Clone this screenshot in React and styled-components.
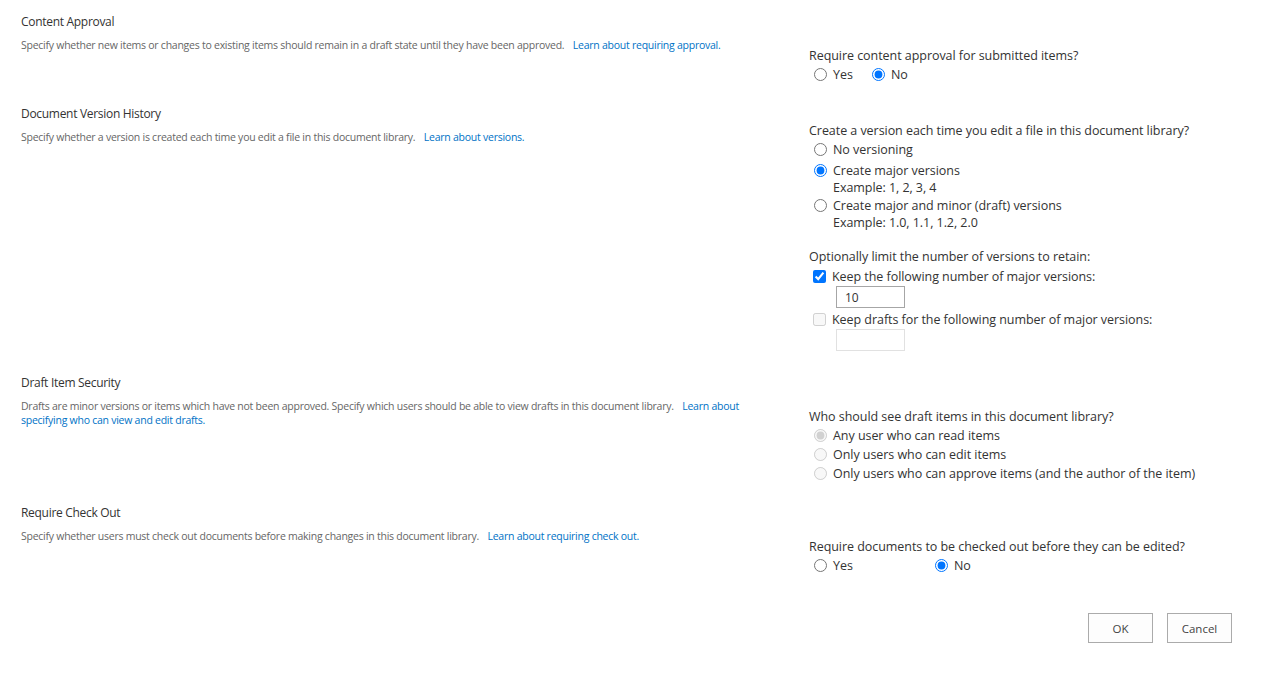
import React from 'react'
import styled, { createGlobalStyle } from 'styled-components'

const GlobalStyle = createGlobalStyle`
  body {
    margin: 0;
    background: #fff;
    font-family: 'Open Sans', 'Noto Sans', 'Liberation Sans', sans-serif;
    color: #333;
  }
`

const Page = styled.div`
  padding: 12px 56px 30px 21px;
`

const Section = styled.div`
  display: grid;
  grid-template-columns: 788px 1fr;
  padding-bottom: ${p => p.gap || 20}px;
`

const Info = styled.div`
  padding-right: 40px;
`

const Title = styled.div`
  font-size: 12px;
  letter-spacing: -0.3px;
  line-height: 20px;
  color: #333;
`

const Description = styled.div`
  margin-top: 6px;
  font-size: 10.5px;
  letter-spacing: -0.25px;
  line-height: 14px;
  color: #666;
`

const Link = styled.a`
  color: #0072c6;
  text-decoration: none;
  margin-left: 6px;
`

const Controls = styled.div`
  padding-top: ${p => p.offset}px;
  font-size: 12.5px;
  letter-spacing: -0.05px;
  color: #333;
`

const Question = styled.div`
  line-height: 19px;
`

const Inline = styled.div`
  display: flex;
`

const Option = styled.label`
  display: flex;
  align-items: center;
  height: 19px;
  width: ${p => (p.width ? `${p.width}px` : 'auto')};
  margin-top: ${p => p.spaced || 0}px;

  input {
    margin: 0 6px 0 5px;
    width: 13px;
    height: 13px;
  }
`

const Example = styled.div`
  padding-left: 24px;
  line-height: 15px;
`

const Subheading = styled.div`
  margin-top: 17px;
  line-height: 19px;
`

const CheckRow = styled.label`
  display: flex;
  align-items: center;
  height: 19px;
  margin-top: ${p => p.spaced || 0}px;

  input {
    margin: 0 6px 0 4px;
    width: 13px;
    height: 13px;
  }
`

const NumberBox = styled.input`
  display: block;
  box-sizing: border-box;
  margin-left: 27px;
  width: 69px;
  height: 22px;
  padding: 0 8px;
  border: 1px solid ${p => (p.disabled ? '#e1e1e1' : '#a6a6a6')};
  background: #fff;
  font: inherit;
  font-size: 12px;
  color: #333;
  outline: none;
`

const Footer = styled.div`
  display: flex;
  justify-content: flex-end;
  gap: 14px;
  margin-top: 18px;
`

const Button = styled.button`
  width: 65px;
  height: 30px;
  background: #fdfdfd;
  border: 1px solid #ababab;
  font-family: inherit;
  font-size: 11.5px;
  color: #444;
  padding: 0;
`

export default function App() {
  return (
    <>
      <GlobalStyle />
      <Page>
        <Section>
          <Info>
            <Title>Content Approval</Title>
            <Description>
              Specify whether new items or changes to existing items should remain in a draft state until they have been approved.
              <Link href="#"> Learn about requiring approval.</Link>
            </Description>
          </Info>
          <Controls offset={34}>
            <Question>Require content approval for submitted items?</Question>
            <Inline>
              <Option width={58}>
                <input type="radio" name="approval" /> Yes
              </Option>
              <Option>
                <input type="radio" name="approval" defaultChecked /> No
              </Option>
            </Inline>
          </Controls>
        </Section>

        <Section gap={22}>
          <Info>
            <Title>Document Version History</Title>
            <Description>
              Specify whether a version is created each time you edit a file in this document library.
              <Link href="#"> Learn about versions.</Link>
            </Description>
          </Info>
          <Controls offset={17}>
            <Question>Create a version each time you edit a file in this document library?</Question>
            <Option>
              <input type="radio" name="versioning" /> No versioning
            </Option>
            <Option spaced={2}>
              <input type="radio" name="versioning" defaultChecked /> Create major versions
            </Option>
            <Example>Example: 1, 2, 3, 4</Example>
            <Option spaced={1}>
              <input type="radio" name="versioning" /> Create major and minor (draft) versions
            </Option>
            <Example>Example: 1.0, 1.1, 1.2, 2.0</Example>
            <Subheading>Optionally limit the number of versions to retain:</Subheading>
            <CheckRow spaced={1}>
              <input type="checkbox" defaultChecked /> Keep the following number of major versions:
            </CheckRow>
            <NumberBox defaultValue="10" />
            <CheckRow spaced={2}>
              <input type="checkbox" disabled /> Keep drafts for the following number of major versions:
            </CheckRow>
            <NumberBox disabled />
          </Controls>
        </Section>

        <Section gap={20}>
          <Info>
            <Title>Draft Item Security</Title>
            <Description>
              Drafts are minor versions or items which have not been approved. Specify which users should be able to view drafts in this document library.
              <Link href="#"> Learn about specifying who can view and edit drafts.</Link>
            </Description>
          </Info>
          <Controls offset={34}>
            <Question>Who should see draft items in this document library?</Question>
            <Option>
              <input type="radio" name="drafts" disabled defaultChecked /> Any user who can read items
            </Option>
            <Option>
              <input type="radio" name="drafts" disabled /> Only users who can edit items
            </Option>
            <Option>
              <input type="radio" name="drafts" disabled /> Only users who can approve items (and the author of the item)
            </Option>
          </Controls>
        </Section>

        <Section>
          <Info>
            <Title>Require Check Out</Title>
            <Description>
              Specify whether users must check out documents before making changes in this document library.
              <Link href="#"> Learn about requiring check out.</Link>
            </Description>
          </Info>
          <Controls offset={34}>
            <Question>Require documents to be checked out before they can be edited?</Question>
            <Inline>
              <Option width={121}>
                <input type="radio" name="checkout" /> Yes
              </Option>
              <Option>
                <input type="radio" name="checkout" defaultChecked /> No
              </Option>
            </Inline>
          </Controls>
        </Section>

        <Footer>
          <Button>OK</Button>
          <Button>Cancel</Button>
        </Footer>
      </Page>
    </>
  )
}
